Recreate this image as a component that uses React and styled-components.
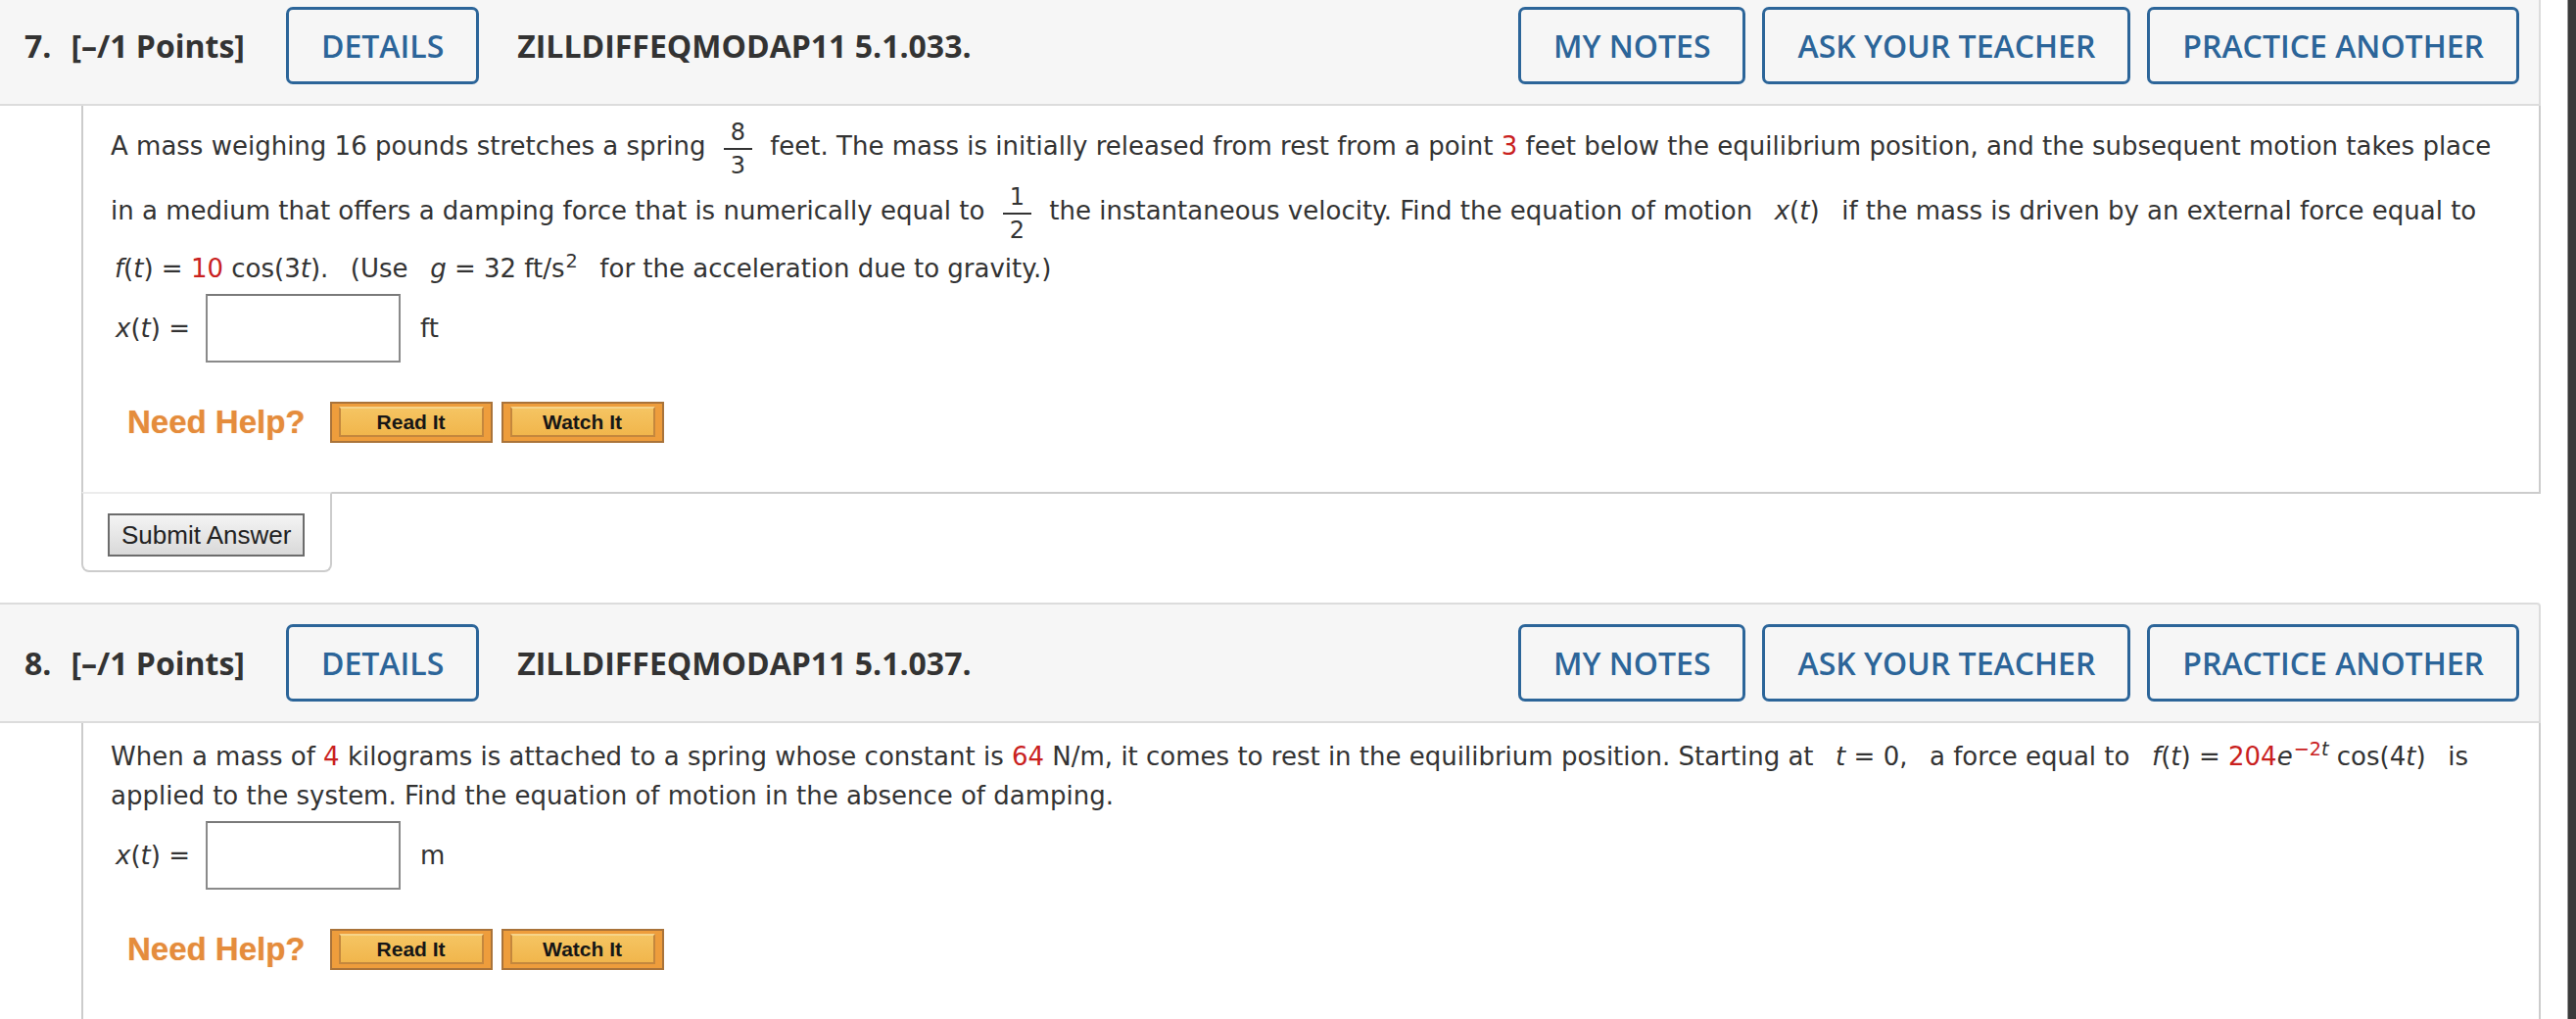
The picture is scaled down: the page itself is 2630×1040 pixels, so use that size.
import React from "react";
import styled, { createGlobalStyle } from "styled-components";

const GlobalStyle = createGlobalStyle`
  html, body {
    margin: 0;
    padding: 0;
    background: #fff;
    overflow: hidden;
  }
  body {
    font-family: "DejaVu Sans", Verdana, sans-serif;
    color: #333;
  }
`;

const Page = styled.div`
  display: flex;
  width: 2630px;
  height: 1040px;
  overflow: hidden;
`;

const Main = styled.main`
  flex: 1;
  padding-right: 27px;
  margin-top: -15px;
`;

const Edge = styled.div`
  width: 8px;
  background: #3a3a3a;
  border-left: 1px solid #9a9a9a;
`;

const Question = styled.section`
  margin-bottom: 31px;
`;

const Header = styled.header`
  display: flex;
  align-items: center;
  background: #f6f6f6;
  border: 2px solid #dcdcdc;
  border-left: none;
  border-top-right-radius: 4px;
  padding: 20px 20px 20px 25px;
  font-family: "Open Sans", "Liberation Sans", sans-serif;
  font-size: 32px;
  font-weight: 700;
  color: #333;
  white-space: nowrap;
`;

const Points = styled.span`
  margin-left: 20px;
`;

const Title = styled.span`
  margin-left: 39px;
`;

const OutlineButton = styled.button`
  height: 79px;
  box-sizing: border-box;
  margin-left: ${(p) => p.$offset || 0}px;
  padding: 0 33px;
  border: 3px solid #2c6599;
  border-radius: 7px;
  background: transparent;
  color: #2c6599;
  font-family: "Open Sans", "Liberation Sans", sans-serif;
  font-size: 32px;
  font-weight: 600;
  white-space: nowrap;
`;

const Actions = styled.div`
  margin-left: auto;
  display: flex;
  gap: 17px;
`;

const Body = styled.div`
  margin-left: 83px;
  background: #fff;
  border: 2px solid #cccccc;
  border-top: none;
  padding: 14px 20px 50px 28px;
`;

const Text = styled.p`
  margin: 0;
  font-size: 26px;
  line-height: 40px;
  white-space: nowrap;
  color: #333;
`;

const Red = styled.span`
  color: #c9211e;
`;

const Var = styled.i`
  font-style: italic;
`;

const Math = styled.span`
  margin: 0 ${(p) => (p.$lead ? "0.55em 0 0.15em" : "0.55em")};
  white-space: nowrap;
`;

const Sup = styled.sup`
  font-size: 0.74em;
  line-height: 0;
  vertical-align: super;
  margin-left: 1px;
`;

const FracBox = styled.span`
  display: inline-flex;
  flex-direction: column;
  vertical-align: 15px;
  margin: 0 10px;
  padding: 2px 0 7px;
  font-size: 24px;
  line-height: 23px;
  text-align: center;
`;

const FracPart = styled.span`
  padding: 0 7px;
`;

const FracBar = styled.span`
  height: 2px;
  margin: 4px 0 5px;
  background: #333;
`;

const Frac = ({ n, d }) => (
  <FracBox>
    <FracPart>{n}</FracPart>
    <FracBar />
    <FracPart>{d}</FracPart>
  </FracBox>
);

const AnswerRow = styled.div`
  display: flex;
  align-items: center;
  margin-top: 6px;
  padding-left: 5px;
  font-size: 26px;
  color: #333;
`;

const AnswerBox = styled.input`
  width: 199px;
  height: 70px;
  box-sizing: border-box;
  margin: 0 0 0 16px;
  border: 2px solid #8a8a8a;
  border-top-color: #7a7a7a;
  background: #fff;
  outline: none;
`;

const Unit = styled.span`
  margin-left: 20px;
`;

const HelpRow = styled.div`
  display: flex;
  align-items: center;
  margin-top: 40px;
  padding-left: 17px;
`;

const NeedHelp = styled.span`
  margin-right: 25px;
  font-family: "Liberation Sans", Arial, sans-serif;
  font-size: 33px;
  font-weight: 700;
  color: #e58c3c;
  text-shadow: 0 0 1px rgba(229, 140, 60, 0.6);
`;

const HelpButton = styled.div`
  display: flex;
  width: 166px;
  height: 42px;
  box-sizing: border-box;
  margin-right: 9px;
  padding: 3px 7px 4px;
  border: 2px solid #a9733a;
  background: #ee9d3c;
`;

const HelpInner = styled.span`
  flex: 1;
  display: flex;
  align-items: center;
  justify-content: center;
  border: 2px solid #c4873d;
  border-top-color: #f6d48a;
  background: linear-gradient(#f5c462, #f1b64c);
  font-family: "Liberation Sans", Arial, sans-serif;
  font-size: 21px;
  font-weight: 700;
  color: #161616;
`;

const SubmitTab = styled.div`
  width: fit-content;
  margin: -2px 0 0 83px;
  padding: 20px 26px 14px 25px;
  background: #fff;
  border: 2px solid #cccccc;
  border-top-color: #ececec;
  border-radius: 0 0 8px 8px;
`;

const SubmitButton = styled.button`
  height: 44px;
  padding: 0 12px;
  border: 2px solid #6c6c6c;
  border-radius: 0;
  background: linear-gradient(#f4f4f4, #d9d9d9);
  font-family: "Liberation Sans", Arial, sans-serif;
  font-size: 26px;
  color: #222;
`;

const questions = [
  {
    num: 7,
    code: "ZILLDIFFEQMODAP11 5.1.033.",
    unit: "ft",
    submit: true,
    text: (
      <>
        A mass weighing 16 pounds stretches a spring <Frac n="8" d="3" /> feet.
        The mass is initially released from rest from a point <Red>3</Red> feet
        below the equilibrium position, and the subsequent motion takes place
        <br />
        in a medium that offers a damping force that is numerically equal to{" "}
        <Frac n="1" d="2" /> the instantaneous velocity. Find the equation of
        motion{" "}
        <Math>
          <Var>x</Var>(<Var>t</Var>)
        </Math>{" "}
        if the mass is driven by an external force equal to
        <br />
        <Math $lead>
          <Var>f</Var>(<Var>t</Var>) = <Red>10</Red> cos(3<Var>t</Var>).
        </Math>{" "}
        (Use{" "}
        <Math>
          <Var>g</Var> = 32 ft/s<Sup>2</Sup>
        </Math>{" "}
        for the acceleration due to gravity.)
      </>
    ),
  },
  {
    num: 8,
    code: "ZILLDIFFEQMODAP11 5.1.037.",
    unit: "m",
    submit: false,
    text: (
      <>
        When a mass of <Red>4</Red> kilograms is attached to a spring whose
        constant is <Red>64</Red> N/m, it comes to rest in the equilibrium
        position. Starting at{" "}
        <Math>
          <Var>t</Var> = 0,
        </Math>{" "}
        a force equal to{" "}
        <Math>
          <Var>f</Var>(<Var>t</Var>) = <Red>204</Red>
          <Var>e</Var>
          <Sup>
            <Red>−2</Red>
            <Var>t</Var>
          </Sup>{" "}
          cos(4<Var>t</Var>)
        </Math>{" "}
        is
        <br />
        applied to the system. Find the equation of motion in the absence of
        damping.
      </>
    ),
  },
];

const QuestionBlock = ({ q }) => (
  <Question>
    <Header>
      <span>{q.num}.</span>
      <Points>[–/1 Points]</Points>
      <OutlineButton $offset={42}>DETAILS</OutlineButton>
      <Title>{q.code}</Title>
      <Actions>
        <OutlineButton>MY NOTES</OutlineButton>
        <OutlineButton>ASK YOUR TEACHER</OutlineButton>
        <OutlineButton>PRACTICE ANOTHER</OutlineButton>
      </Actions>
    </Header>
    <Body>
      <Text>{q.text}</Text>
      <AnswerRow>
        <span>
          <Var>x</Var>(<Var>t</Var>) =
        </span>
        <AnswerBox type="text" />
        <Unit>{q.unit}</Unit>
      </AnswerRow>
      <HelpRow>
        <NeedHelp>Need Help?</NeedHelp>
        <HelpButton>
          <HelpInner>Read It</HelpInner>
        </HelpButton>
        <HelpButton>
          <HelpInner>Watch It</HelpInner>
        </HelpButton>
      </HelpRow>
    </Body>
    {q.submit && (
      <SubmitTab>
        <SubmitButton>Submit Answer</SubmitButton>
      </SubmitTab>
    )}
  </Question>
);

export default function App() {
  return (
    <>
      <GlobalStyle />
      <Page>
        <Main>
          {questions.map((q) => (
            <QuestionBlock key={q.num} q={q} />
          ))}
        </Main>
        <Edge />
      </Page>
    </>
  );
}
